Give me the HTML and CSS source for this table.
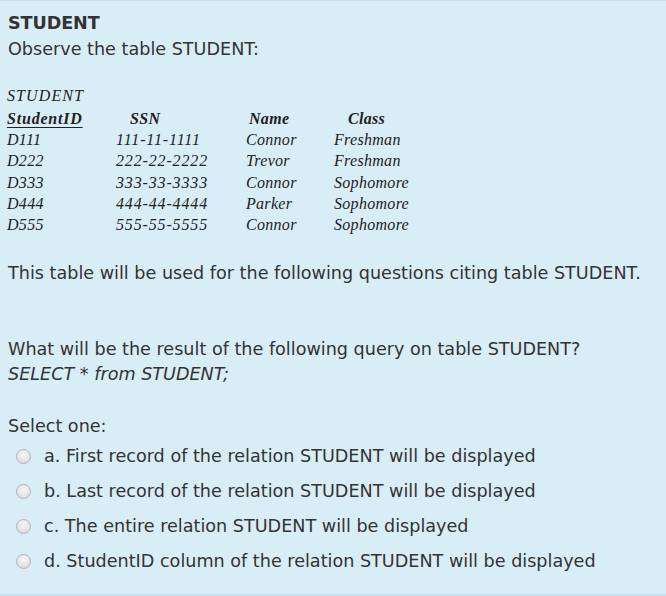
FILE: index.html
```html
<!DOCTYPE html>
<html>
<head>
<meta charset="utf-8">
<link rel="stylesheet" href="styles.css">
</head>
<body>
<div class="panel">
  <div class="title">STUDENT</div>
  <div class="line">Observe the table STUDENT:</div>
  <div class="figure">
    <div class="caption">STUDENT</div>
    <table class="rel">
      <tr class="head"><th class="c1"><u>StudentID</u></th><th class="c2">SSN</th><th class="c3">Name</th><th class="c4">Class</th></tr>
      <tr><td class="c1">D111</td><td class="c2">111-11-1111</td><td class="c3">Connor</td><td class="c4">Freshman</td></tr>
      <tr><td class="c1">D222</td><td class="c2">222-22-2222</td><td class="c3">Trevor</td><td class="c4">Freshman</td></tr>
      <tr><td class="c1">D333</td><td class="c2">333-33-3333</td><td class="c3">Connor</td><td class="c4">Sophomore</td></tr>
      <tr><td class="c1">D444</td><td class="c2">444-44-4444</td><td class="c3">Parker</td><td class="c4">Sophomore</td></tr>
      <tr><td class="c1">D555</td><td class="c2">555-55-5555</td><td class="c3">Connor</td><td class="c4">Sophomore</td></tr>
    </table>
  </div>
  <p class="note">This table will be used for the following questions citing table STUDENT.</p>
  <p class="question">What will be the result of the following query on table STUDENT?<br><em>SELECT * from STUDENT;</em></p>
  <div class="prompt">Select one:</div>
  <div class="options">
    <label class="opt"><span class="radio"></span>a. First record of the relation STUDENT will be displayed</label>
    <label class="opt"><span class="radio"></span>b. Last record of the relation STUDENT will be displayed</label>
    <label class="opt"><span class="radio"></span>c. The entire relation STUDENT will be displayed</label>
    <label class="opt"><span class="radio"></span>d. StudentID column of the relation STUDENT will be displayed</label>
  </div>
</div>
</body>
</html>
```
FILE: styles.css
```css
html, body { margin: 0; padding: 0; }
body { background: #d9edf7; font-family: "DejaVu Sans", Verdana, sans-serif; color: #333; }
.panel {
  width: 666px; height: 596px; box-sizing: border-box;
  background: #d9edf7;
  border-top: 1px solid #c4e3ef;
  border-bottom: 2px solid #c4e3ef;
  padding: 10px 8px 0 8px;
  font-size: 17.6px;
}
.title { font-weight: bold; line-height: 24px; letter-spacing: -0.1px; }
.line { line-height: 24px; margin-top: 2px; }
.figure { margin-top: 26px; margin-left: -1px; font-family: "Liberation Serif", "Times New Roman", serif; font-style: italic; font-size: 16px; color: #222; letter-spacing: 0.3px; }
.caption { line-height: 18px; letter-spacing: 1.1px; }
.rel { border-collapse: collapse; margin-top: 3px; }
.rel th, .rel td { padding: 0; text-align: left; line-height: 21.2px; height: 21.2px; font-style: italic; white-space: nowrap; }
.rel th { font-weight: bold; }
.rel th u { text-decoration-thickness: 1px; text-underline-offset: 3px; }
.c1 { width: 109px; }
.head .c1 { letter-spacing: 0.8px; }
.c2 { width: 130px; letter-spacing: 0.85px; }
.c3 { width: 88px; }
.c4 { width: 80px; }
.head .c2 { padding-left: 14px; box-sizing: border-box; letter-spacing: 0.3px; }
.head .c3 { padding-left: 3px; box-sizing: border-box; }
.head .c4 { padding-left: 14px; box-sizing: border-box; }
.note { margin: 26px 0 0 0; line-height: 24px; }
.question { margin: 52px 0 0 0; line-height: 24px; }
.question em { display: inline-block; margin-top: 1px; }
.prompt { margin-top: 28px; line-height: 24px; }
.options { display: flex; flex-direction: column; gap: 11px; margin-top: 6px; }
.opt { display: flex; align-items: center; gap: 13px; line-height: 24px; padding-left: 8px; }
.radio {
  width: 15px; height: 15px; border-radius: 50%; box-sizing: border-box;
  border: 1px solid #b3b3b3;
  background: radial-gradient(circle at 50% 35%, #f6f6f6 0%, #e4e4e4 60%, #d2d2d2 100%);
  flex: none;
}
```
